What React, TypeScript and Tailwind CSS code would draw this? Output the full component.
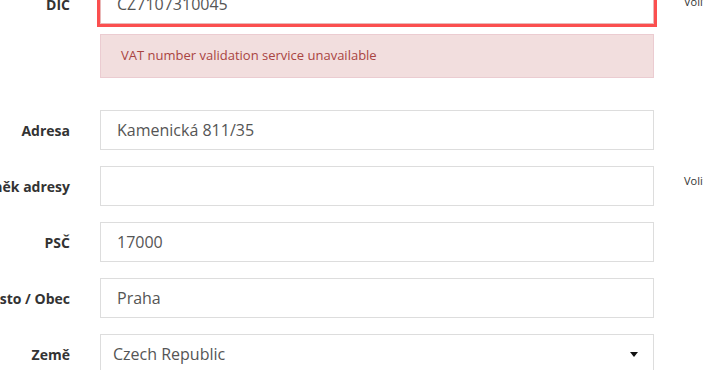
import React from "react";

const font = { fontFamily: '"Open Sans", "Liberation Sans", sans-serif' };

function Row({
  label,
  children,
  help,
  helpPad = "pt-[7px]",
  className = "",
}: {
  label: string;
  children: React.ReactNode;
  help?: string;
  helpPad?: string;
  className?: string;
}) {
  return (
    <div className={`flex items-stretch ${className}`}>
      <div className="w-[70px] shrink-0 flex items-center justify-end">
        <span className="whitespace-nowrap text-[14px] font-bold text-[#333]">{label}</span>
      </div>
      <div className="w-[554px] shrink-0 ml-[30px]">{children}</div>
      <div className={`ml-[30px] whitespace-nowrap text-[11px] leading-[16px] text-[#333] ${helpPad}`}>
        {help}
      </div>
    </div>
  );
}

function Input({ value, error = false }: { value: string; error?: boolean }) {
  return (
    <div
      className={`h-[40px] w-full flex items-center pl-[16px] bg-white text-[16px] text-[#555] border ${
        error ? "border-[#e9b8b8] shadow-[0_0_0_3px_#fb4f4f]" : "border-[#dddddd]"
      }`}
    >
      {value}
    </div>
  );
}

export default function App() {
  return (
    <div className="w-[703px] h-[370px] overflow-hidden bg-white" style={font}>
      <div className="mt-[-16px]">
        <Row label="DIČ" help="Volitelné" helpPad="pt-[10px]">
          <Input value="CZ7107310045" error />
        </Row>
        <div className="flex mt-[10px]">
          <div className="w-[100px] shrink-0" />
          <div className="w-[554px] h-[44px] bg-[#f2dede] border border-[#ebccd1] text-[#a94442] text-[13px] flex items-center pl-[20px]">
            VAT number validation service unavailable
          </div>
        </div>
        <div className="mt-[32px] flex flex-col gap-[16px]">
          <Row label="Adresa">
            <Input value="Kamenická 811/35" />
          </Row>
          <Row label="Doplněk adresy" help="Volitelné">
            <Input value="" />
          </Row>
          <Row label="PSČ">
            <Input value="17000" />
          </Row>
          <Row label="Město / Obec">
            <Input value="Praha" />
          </Row>
          <Row label="Země">
            <div className="h-[40px] w-full flex items-center justify-between pl-[12px] pr-[15px] bg-white text-[16px] text-[#555] border border-[#dddddd]">
              <span>Czech Republic</span>
              <svg width="8" height="5" viewBox="0 0 8 5" className="mt-[1px]">
                <path d="M0 0 H8 L4 5 Z" fill="#111" />
              </svg>
            </div>
          </Row>
        </div>
      </div>
    </div>
  );
}
